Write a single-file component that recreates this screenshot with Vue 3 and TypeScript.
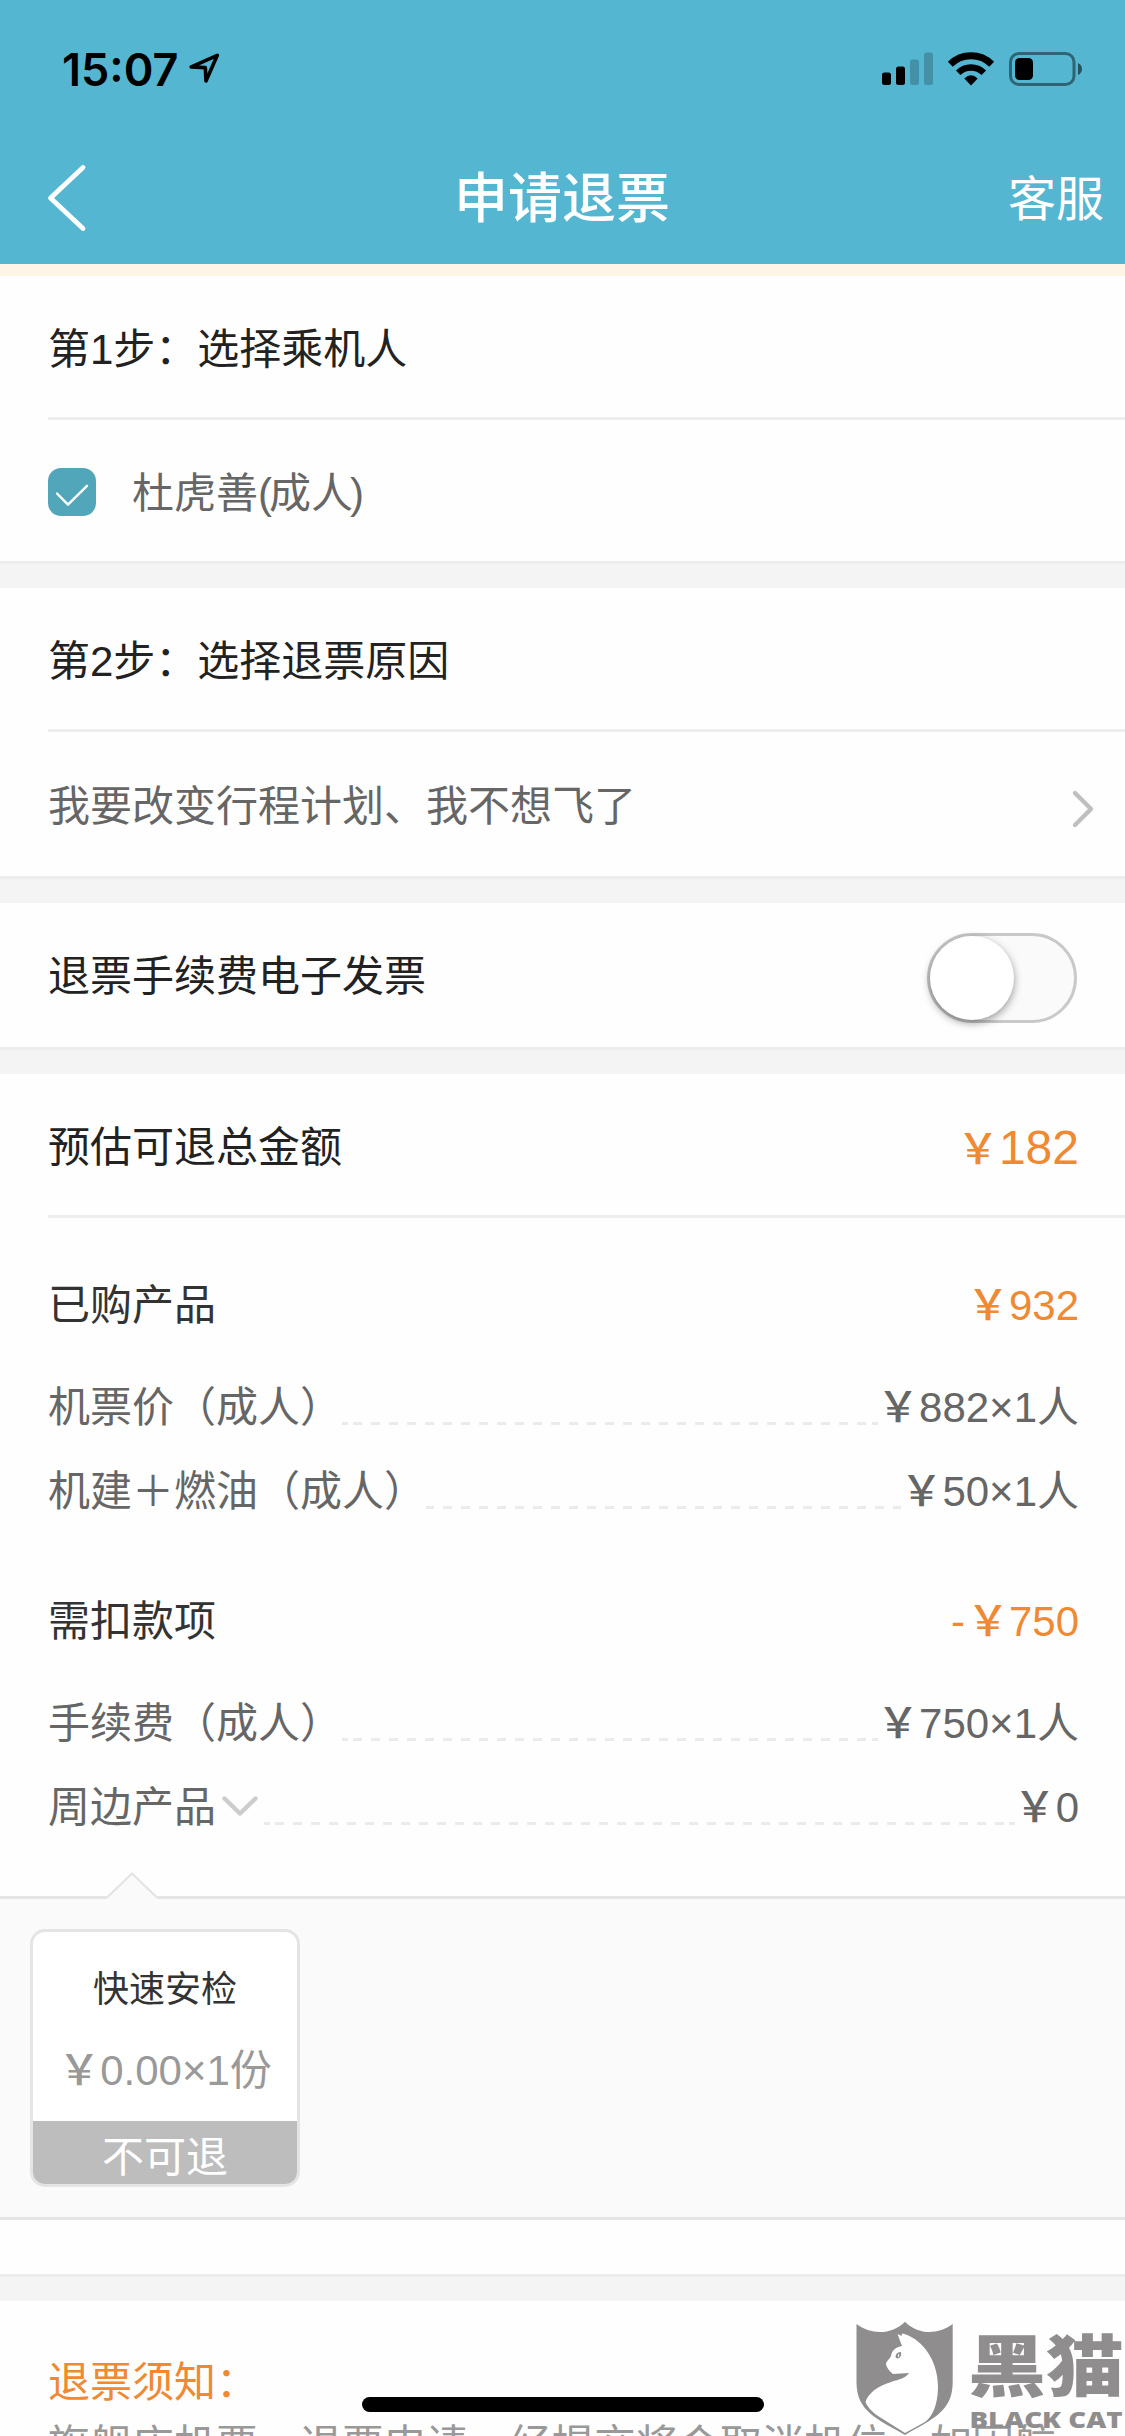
<script setup lang="ts">
interface FeeLine {
  label: string
  price: string
  unit: string
  leader: 'tight' | 'loose'
  expandable?: boolean
}

interface FeeGroup {
  title: string
  sign: string
  total: string
  lines: FeeLine[]
}

const groups: FeeGroup[] = [
  {
    title: '已购产品',
    sign: '',
    total: '932',
    lines: [
      { label: '机票价（成人）', price: '882', unit: '×1人', leader: 'tight' },
      { label: '机建＋燃油（成人）', price: '50', unit: '×1人', leader: 'loose' },
    ],
  },
  {
    title: '需扣款项',
    sign: '-',
    total: '750',
    lines: [
      { label: '手续费（成人）', price: '750', unit: '×1人', leader: 'tight' },
      { label: '周边产品', price: '0', unit: '', leader: 'tight', expandable: true },
    ],
  },
]
</script>

<template>
  <div class="screen">
    <header class="top">
      <div class="status">
        <span class="time">15:07</span>
        <svg class="loc" width="31" height="31" viewBox="0 0 31 31">
          <path d="M28.3 2.3 L2.3 13.9 L16.3 14.6 L17 28 Z" fill="none" stroke="#000" stroke-width="3.6" stroke-linejoin="round" />
        </svg>
        <svg class="signal" width="202" height="36" viewBox="0 0 202 36">
          <rect x="1" y="21.500" width="9" height="12.500" rx="2.500" />
          <rect x="15" y="15.500" width="9" height="18.500" rx="2.500" />
          <rect x="29" y="8.500" width="9" height="25.500" rx="2.500" opacity=".2" />
          <rect x="43" y="1.500" width="9" height="32.500" rx="2.500" opacity=".2" />
          <g fill="none" stroke="#000">
            <path d="M69.300 13.300 A29.500 29.500 0 0 1 110.700 13.300" stroke-width="7" />
            <path d="M77.200 21.700 A18.300 18.300 0 0 1 102.800 21.700" stroke-width="6.400" />
          </g>
          <path d="M83.300 27.600 Q90 21 96.700 27.600 L90 34.500 Z" />
          <rect x="129.500" y="2.500" width="63.500" height="31" rx="8.500" fill="none" stroke="#000" stroke-width="3" opacity=".45" />
          <rect x="134" y="7" width="18" height="22" rx="4.500" />
          <path d="M197 12 Q201 14 201 18 Q201 22 197 24 Z" opacity=".55" />
        </svg>
      </div>
      <nav class="nav">
        <svg class="back" width="42" height="70" viewBox="0 0 42 70">
          <path d="M37 4.500 L4.500 35 L37 65.500" fill="none" stroke="#fff" stroke-width="4.800" stroke-linecap="round" stroke-linejoin="round" />
        </svg>
        <h1>申请退票</h1>
        <span class="service">客服</span>
      </nav>
    </header>
    <div class="cream"></div>

    <section class="block">
      <div class="row head"><span class="t">第1步：选择乘机人</span></div>
      <div class="row r141 gray">
        <svg class="check" width="48" height="48" viewBox="0 0 48 48">
          <rect width="48" height="48" rx="13" fill="#52a6b9" />
          <path d="M9 25.500 L20 36.700 L39 17.800" fill="none" stroke="#fff" stroke-width="2.400" stroke-linecap="round" stroke-linejoin="round" />
        </svg>
        <span class="t">杜虎善<span class="paren">(</span>成人<span class="paren close">)</span></span>
      </div>
    </section>

    <section class="block">
      <div class="row head"><span class="t">第2步：选择退票原因</span></div>
      <div class="row r144 gray">
        <span class="t">我要改变行程计划、我不想飞了</span>
        <svg class="more" width="24" height="40" viewBox="0 0 24 40">
          <path d="M4 4 L20 20 L4 36" fill="none" stroke="#bfbfbf" stroke-width="4.400" stroke-linecap="round" stroke-linejoin="round" />
        </svg>
      </div>
    </section>

    <section class="block">
      <div class="row r144">
        <span class="t up">退票手续费电子发票</span>
        <div class="switch"><i></i></div>
      </div>
    </section>

    <section class="block">
      <div class="row head">
        <span class="t">预估可退总金额</span>
        <span class="t money big"><b class="yen">￥</b>182</span>
      </div>
      <div class="fees">
        <div v-for="g in groups" :key="g.title" class="group">
          <div class="fee title">
            <span class="t">{{ g.title }}</span>
            <span class="t money"><span v-if="g.sign" class="sign">{{ g.sign }}</span><b class="yen">￥</b>{{ g.total }}</span>
          </div>
          <div v-for="l in g.lines" :key="l.label" class="fee gray" :class="{ open: l.expandable }">
            <span class="t">{{ l.label }}</span>
            <svg v-if="l.expandable" class="fold" width="36" height="20" viewBox="0 0 36 20">
              <path d="M2.500 2.500 L18 17.500 L33.500 2.500" fill="none" stroke="#ccc" stroke-width="4.400" stroke-linecap="round" stroke-linejoin="round" />
            </svg>
            <span class="leader" :class="l.leader"></span>
            <span class="t"><b class="yen">￥</b>{{ l.price }}{{ l.unit }}</span>
          </div>
        </div>
      </div>
      <div class="extras">
        <svg class="notch" width="50" height="27" viewBox="0 0 50 27">
          <path d="M0 27 V24.500 L25 1.500 L50 24.500 V27 Z" fill="#fafafa" />
          <path d="M0 25.500 L25 1.500 L50 25.500" fill="none" stroke="#e4e4e4" stroke-width="2" />
        </svg>
        <div class="card">
          <div class="name">快速安检</div>
          <div class="count"><b class="yen">￥</b>0.00×1份</div>
          <div class="state">不可退</div>
        </div>
      </div>
      <div class="tail"></div>
    </section>

    <section class="notice">
      <h2>退票须知：</h2>
      <p>旗舰店机票，退票申请一经提交将会取消机位，如因航</p>
    </section>

    <svg class="mark" width="285" height="126" viewBox="0 0 285 126">
      <path d="M16.500 14 C31 25 52 25 65 11.700 C78 25 98 25 112.700 14 V72 C112.700 102 92 109 65 125 C38 109 16.500 102 16.500 72 Z" fill="#8f8d8e" />
      <path d="M62 36 L57.500 24 L61.500 26 L62 23.500 C79 27 98 47 98 77 C98 95 92 107 85 112 L65 123 L38 106 C31 101 27 96 25.500 92 C31 77 48 73 59 69.500 C64 68 67 66 69 63 L53 64 C49 61 46 56 46 54 C46 51 50 49 51 46 C52 40 56 37 62 36 Z" fill="#fff" />
      <path d="M55.500 46 Q56.500 42 61 42 Q62 47 58 48.500 Q55.500 48.500 55.500 46 Z" fill="#8f8d8e" />
      <path d="M58.200 43.500 Q60 45 58.700 47.500 Q57.300 45.500 58.200 43.500 Z" fill="#fff" />
      <text class="cn" transform="translate(128 80.500) scale(1 .86)" textLength="156" lengthAdjust="spacingAndGlyphs">黑猫</text>
      <text class="en" x="129.500" y="118" textLength="153" lengthAdjust="spacingAndGlyphs">BLACK CAT</text>
    </svg>
    <div class="home"></div>
  </div>
</template>

<style>
body {
  margin: 0;
  background: #fff;
}
</style>

<style scoped>
.screen {
  position: relative;
  width: 1125px;
  height: 2436px;
  overflow: hidden;
  background: #fefefe;
  color: #222;
  font: 400 42px/1 "Liberation Sans", "Noto Sans CJK SC", sans-serif;
}
.screen * {
  box-sizing: border-box;
}
svg {
  display: block;
  flex: none;
}
.top {
  height: 264px;
  background: #55b6d1;
}
.status {
  display: flex;
  height: 132px;
  padding: 51px 42px 0 62px;
}
.time {
  width: 127px;
  color: #000;
  font: 600 45px/37px Inter, "Liberation Sans", sans-serif;
}
.loc {
  margin-top: 2px;
}
.signal {
  margin-left: auto;
}
.nav {
  display: flex;
  align-items: center;
  height: 132px;
  padding: 0 21px 0 46px;
  color: #fff;
}
.nav h1 {
  flex: 1;
  margin: 0;
  padding: 0 0 6px 28px;
  text-align: center;
  font: 500 54px/1 "Noto Sans CJK SC", sans-serif;
}
.service {
  padding-bottom: 6px;
  font: 400 48px/1 "Noto Sans CJK SC", sans-serif;
}
.cream {
  height: 12px;
  background: #fff5e7;
}
.block {
  border-bottom: 24px solid #f4f4f4;
}
.row {
  display: flex;
  align-items: center;
  padding: 0 46px 0 48px;
}
.head {
  height: 144px;
  margin-left: 48px;
  padding-left: 0;
  border-bottom: 3px solid #ededed;
}
.r141 {
  height: 144px;
  border-bottom: 3px solid #ededed;
}
.r144 {
  height: 147px;
  border-bottom: 3px solid #ededed;
}
.gray {
  color: #666;
}
.t {
  padding-top: 6px;
  white-space: nowrap;
}
.up {
  padding-top: 4px;
}
.paren {
  letter-spacing: -3px;
}
.close {
  margin-left: -3px;
}
.sign {
  margin-right: 2px;
}
.yen {
  font: 500 42px/0 "Noto Sans CJK SC", sans-serif;
}
.check {
  margin: 3px 36px 0 0;
}
.more {
  margin: 10px -16px 0 auto;
}
.switch {
  width: 150px;
  height: 90px;
  margin: 6px 2px 0 auto;
  border: 3px solid #c9c9c9;
  border-radius: 45px;
  background: #fafafa;
}
.switch i {
  display: block;
  width: 84px;
  height: 84px;
  border-radius: 50%;
  background: #fff;
  box-shadow: 0 3px 9px rgba(0, 0, 0, 0.4);
}
.money {
  margin-left: auto;
  color: #ef8932;
}
.big {
  font-size: 48px;
}
.fees {
  padding: 43px 46px 3px 48px;
}
.group {
  padding-bottom: 46px;
}
.fee {
  display: flex;
  align-items: center;
  height: 84px;
}
.title {
  margin-bottom: 18px;
  color: #333;
}
.leader {
  flex: 1;
  align-self: flex-start;
  height: 3px;
  margin: 59px -1px 0 0;
  background: repeating-linear-gradient(90deg, #ebebeb 0 9px, transparent 9px 18px) content-box;
}
.tight {
  padding: 0 5px;
  border: solid #ebebeb;
  border-width: 0 6px;
}
.loose {
  padding: 0 9px;
  border: solid #ebebeb;
  border-width: 0 8px;
}
.fold {
  margin: 2px 0 0 6px;
}
.open .leader {
  margin-left: 6px;
}
.extras {
  position: relative;
  height: 324px;
  padding: 30px;
  border: solid #e4e4e4;
  border-width: 3px 0;
  background: #fafafa;
}
.notch {
  position: absolute;
  left: 107px;
  top: -27px;
}
.card {
  display: flex;
  flex-direction: column;
  width: 270px;
  height: 258px;
  overflow: hidden;
  border: 3px solid #e4e4e4;
  border-radius: 15px;
  background: #fff;
  text-align: center;
  white-space: nowrap;
}
.name {
  height: 99px;
  padding-top: 40px;
  color: #333;
  font-size: 36px;
}
.count {
  height: 90px;
  padding-top: 19px;
  color: #999;
}
.state {
  height: 63px;
  padding-top: 16px;
  background: #bdbdbd;
  color: #fff;
}
.tail {
  height: 57px;
  border-bottom: 3px solid #ededed;
}
.notice {
  padding: 61px 0 0 48px;
}
.notice h2 {
  margin: 0;
  color: #ef8932;
  font-weight: 400;
  font-size: 42px;
  line-height: 42px;
}
.notice p {
  margin: 21px 0 0;
  color: #999;
  white-space: nowrap;
}
.mark {
  position: absolute;
  left: 840px;
  top: 2310px;
  fill: #8f8d8e;
}
.cn {
  font: 900 78px "Noto Sans CJK SC", sans-serif;
}
.en {
  font: 800 23px "Open Sans", "Noto Sans", sans-serif;
}
.home {
  position: absolute;
  left: 362px;
  top: 2397px;
  width: 402px;
  height: 15px;
  border-radius: 8px;
  background: #000;
}
</style>
